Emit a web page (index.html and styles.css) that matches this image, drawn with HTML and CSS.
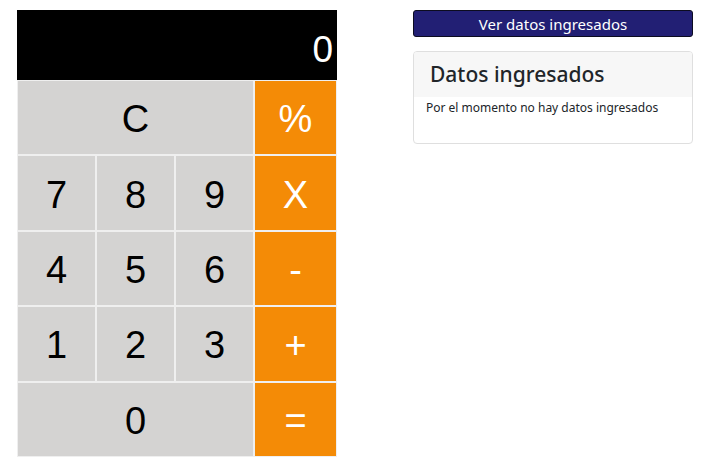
FILE: index.html
```
<!DOCTYPE html>
<html lang="es">
<head>
<meta charset="utf-8">
<title>Calculadora</title>
<link rel="stylesheet" href="styles.css">
</head>
<body>
<div class="page">
  <div class="calc">
    <div class="display">0</div>
    <button class="key wide">C</button>
    <button class="key op">%</button>
    <button class="key">7</button>
    <button class="key">8</button>
    <button class="key">9</button>
    <button class="key op">X</button>
    <button class="key">4</button>
    <button class="key">5</button>
    <button class="key">6</button>
    <button class="key op">-</button>
    <button class="key">1</button>
    <button class="key">2</button>
    <button class="key">3</button>
    <button class="key op">+</button>
    <button class="key wide">0</button>
    <button class="key op">=</button>
  </div>
  <div class="side">
    <button class="show-btn">Ver datos ingresados</button>
    <div class="card">
      <div class="card-header"><h4 class="card-title">Datos ingresados</h4></div>
      <div class="card-body"><p class="empty">Por el momento no hay datos ingresados</p></div>
    </div>
  </div>
</div>
</body>
</html>
```
FILE: styles.css
```
* { box-sizing: border-box; }
html, body { margin: 0; padding: 0; background: #ffffff; }
.page {
  display: flex;
  align-items: flex-start;
  gap: 76px;
  padding: 10px 17px;
}
.calc {
  width: 320px;
  display: grid;
  grid-template-columns: 79px 79px 79px 83px;
  grid-template-rows: 70px repeat(5, 75.4px);
  font-family: "Liberation Sans", Arial, sans-serif;
}
.display {
  grid-column: 1 / 5;
  background: #000000;
  color: #ffffff;
  font-size: 37px;
  line-height: 1;
  display: flex;
  justify-content: flex-end;
  align-items: flex-end;
  padding: 0 4px 12px 0;
}
.key {
  margin: 0;
  border: 1px solid #efefef;
  background: #d4d3d2;
  color: #000000;
  font-family: "Liberation Sans", Arial, sans-serif;
  font-size: 38px;
  padding: 4px 0 0 0;
  display: flex;
  align-items: center;
  justify-content: center;
}
.key.wide { grid-column: span 3; }
.key.op { background: #f48b06; color: #ffffff; }
.side {
  width: 280px;
  display: flex;
  flex-direction: column;
  gap: 14px;
  font-family: "Noto Sans", "Open Sans", sans-serif;
}
.show-btn {
  height: 27px;
  margin: 0;
  background: #221f74;
  color: #ffffff;
  border: 1.5px solid #0c0c20;
  border-radius: 3px;
  font-family: "Noto Sans", "Open Sans", sans-serif;
  font-size: 15px;
  padding: 0;
}
.card {
  border: 1px solid #dfdfdf;
  border-radius: 4px;
  background: #ffffff;
  overflow: hidden;
}
.card-header {
  background: #f7f7f7;
  padding: 8px 16px 8px 16px;
  height: 45px;
}
.card-title {
  margin: 0;
  font-size: 21px;
  font-weight: 500;
  line-height: 29px;
  color: #212529;
}
.card-body {
  padding: 2px 12px 27px;
}
.empty {
  margin: 0;
  font-size: 12px;
  line-height: 17px;
  color: #212529;
}
```
